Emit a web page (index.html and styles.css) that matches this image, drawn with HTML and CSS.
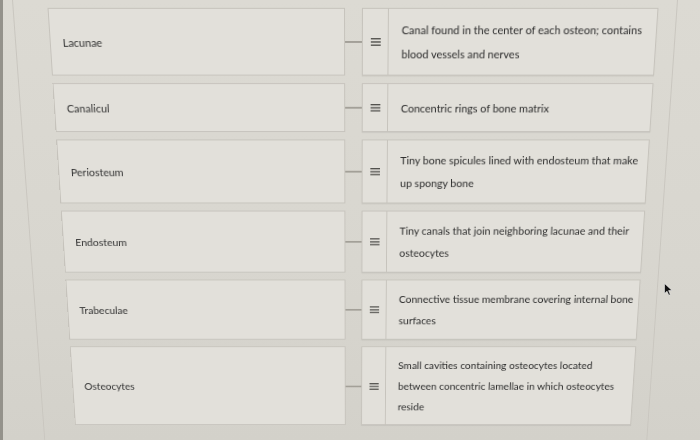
FILE: index.html
```html
<!DOCTYPE html>
<html lang="en">
<head>
<meta charset="utf-8">
<title>Matching</title>
<link rel="stylesheet" href="styles.css">
</head>
<body>
<div class="sheet">
  <div class="frame">
    <div class="list">
      <div class="row">
        <div class="term">Lacunae</div>
        <div class="link"></div>
        <div class="answer"><div class="handle"><svg width="10" height="8" viewBox="0 0 10 8"><rect y="0" width="10" height="1.4"/><rect y="3.3" width="10" height="1.4"/><rect y="6.6" width="10" height="1.4"/></svg></div><div class="desc">Canal found in the center of each osteon; contains blood vessels and nerves</div></div>
      </div>
      <div class="row">
        <div class="term">Canalicul</div>
        <div class="link"></div>
        <div class="answer"><div class="handle"><svg width="10" height="8" viewBox="0 0 10 8"><rect y="0" width="10" height="1.4"/><rect y="3.3" width="10" height="1.4"/><rect y="6.6" width="10" height="1.4"/></svg></div><div class="desc">Concentric rings of bone matrix</div></div>
      </div>
      <div class="row">
        <div class="term">Periosteum</div>
        <div class="link"></div>
        <div class="answer"><div class="handle"><svg width="10" height="8" viewBox="0 0 10 8"><rect y="0" width="10" height="1.4"/><rect y="3.3" width="10" height="1.4"/><rect y="6.6" width="10" height="1.4"/></svg></div><div class="desc">Tiny bone spicules lined with endosteum that make up spongy bone</div></div>
      </div>
      <div class="row">
        <div class="term">Endosteum</div>
        <div class="link"></div>
        <div class="answer"><div class="handle"><svg width="10" height="8" viewBox="0 0 10 8"><rect y="0" width="10" height="1.4"/><rect y="3.3" width="10" height="1.4"/><rect y="6.6" width="10" height="1.4"/></svg></div><div class="desc">Tiny canals that join neighboring lacunae and their osteocytes</div></div>
      </div>
      <div class="row">
        <div class="term">Trabeculae</div>
        <div class="link"></div>
        <div class="answer"><div class="handle"><svg width="10" height="8" viewBox="0 0 10 8"><rect y="0" width="10" height="1.4"/><rect y="3.3" width="10" height="1.4"/><rect y="6.6" width="10" height="1.4"/></svg></div><div class="desc">Connective tissue membrane covering internal bone surfaces</div></div>
      </div>
      <div class="row">
        <div class="term">Osteocytes</div>
        <div class="link"></div>
        <div class="answer"><div class="handle"><svg width="10" height="8" viewBox="0 0 10 8"><rect y="0" width="10" height="1.4"/><rect y="3.3" width="10" height="1.4"/><rect y="6.6" width="10" height="1.4"/></svg></div><div class="desc">Small cavities containing osteocytes located between concentric lamellae in which osteocytes reside</div></div>
      </div>
    </div>
  </div>
</div>
<svg class="cursor" width="9" height="13" viewBox="0 0 9 13"><path d="M0.5 0.5 L0.5 10.5 L3 8.2 L4.8 12.3 L6.3 11.6 L4.6 7.6 L8 7.4 Z" fill="#111" stroke="#eee" stroke-width="0.6"/></svg>
</body>
</html>
```

FILE: styles.css
```css
html, body {
  margin: 0;
  padding: 0;
  width: 700px;
  height: 440px;
  overflow: hidden;
}
body {
  position: relative;
  background: linear-gradient(180deg, #dcdad3 0%, #d8d6cf 60%, #d3d1ca 100%);
  font-family: Lato, "Open Sans", sans-serif;
  border-left: 3px solid #94928b;
  box-sizing: border-box;
}
.sheet {
  width: 700px;
  height: 520px;
  margin-left: -3px;
  transform-origin: 353px 0;
  transform: perspective(820px) rotateX(-10deg);
}
.frame {
  margin-left: 12px;
  width: 666px;
  height: 100%;
  box-sizing: border-box;
  border-left: 1px solid #c9c6bf;
  border-right: 1px solid #c9c6bf;
  padding-top: 8px;
}
.list {
  margin-left: 34px;
  width: 612px;
  display: flex;
  flex-direction: column;
  gap: 8px;
}
.row {
  display: grid;
  grid-template-columns: 298px 17px 297px;
  min-height: 52px;
}
.term {
  background: #e2e0da;
  border: 1px solid #c6c3bc;
  display: flex;
  align-items: center;
  padding-left: 12px;
  font-size: 11px;
  color: #333;
}
.link {
  align-self: center;
  height: 2px;
  background: #a3a098;
}
.answer {
  display: flex;
  background: #e2e0da;
  border: 1px solid #c6c3bc;
  box-shadow: 0 1px 1px rgba(0,0,0,0.06);
}
.handle {
  width: 25px;
  flex: none;
  border-right: 1px solid #c6c3bc;
  display: flex;
  align-items: center;
  justify-content: center;
}
.handle svg {
  fill: #4f4e4a;
}
.desc {
  flex: 1;
  padding: 9px 4px 9px 13px;
  line-height: 25px;
  font-size: 11px;
  color: #2c2c2c;
  display: flex;
  align-items: center;
}
.cursor {
  position: absolute;
  left: 661px;
  top: 283px;
}
```
